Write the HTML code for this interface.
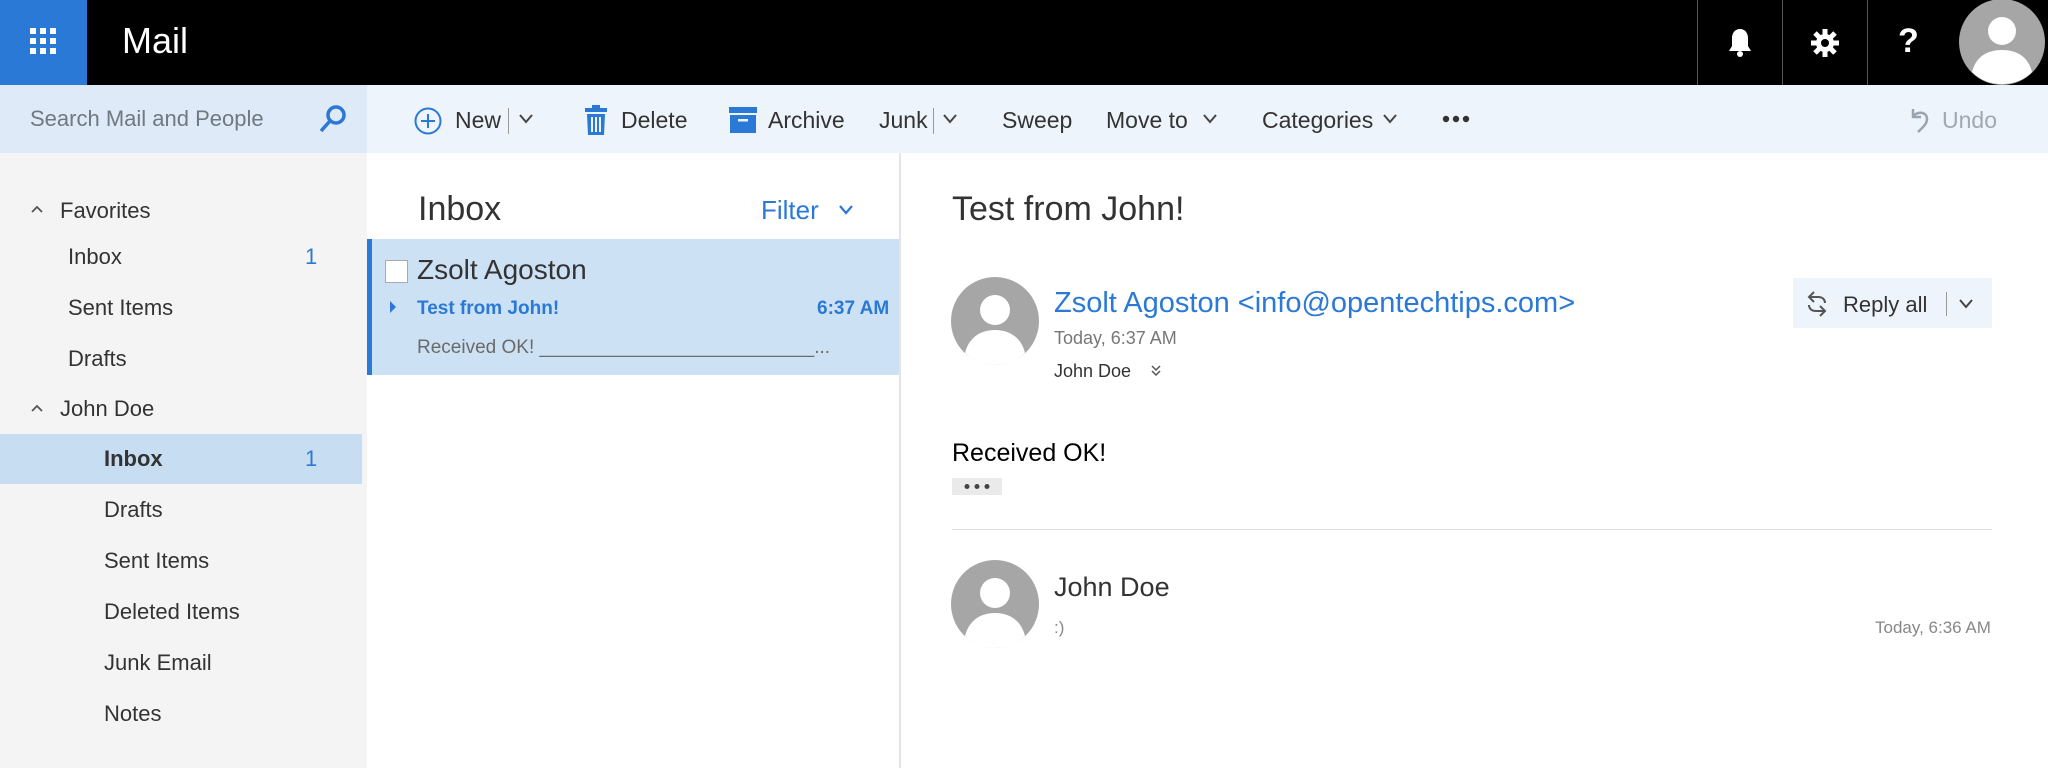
<!DOCTYPE html>
<html><head><meta charset="utf-8"><style>
*{margin:0;padding:0;box-sizing:border-box}
body{width:2048px;height:768px;overflow:hidden;font-family:"Liberation Sans",sans-serif;background:#fff;position:relative;color:#333}
.a{position:absolute;white-space:nowrap}
</style></head><body>
<div class="a" style="left:0;top:0;width:2048px;height:85px;background:#000"></div>
<div class="a" style="left:0;top:0;width:87px;height:85px;background:#2b79d6"></div>
<svg class="a" style="left:30px;top:28px" width="28" height="28" viewBox="0 0 28 28" fill="#fff">
<rect x="0" y="0" width="6" height="6"/><rect x="10" y="0" width="6" height="6"/><rect x="20" y="0" width="6" height="6"/>
<rect x="0" y="10" width="6" height="6"/><rect x="10" y="10" width="6" height="6"/><rect x="20" y="10" width="6" height="6"/>
<rect x="0" y="20" width="6" height="6"/><rect x="10" y="20" width="6" height="6"/><rect x="20" y="20" width="6" height="6"/></svg>
<div class="a" style="left:122px;top:20px;font-size:36px;color:#fff">Mail</div>
<div class="a" style="left:1697px;top:0;width:1px;height:85px;background:#555"></div>
<div class="a" style="left:1782px;top:0;width:1px;height:85px;background:#555"></div>
<div class="a" style="left:1867px;top:0;width:1px;height:85px;background:#555"></div>
<svg class="a" style="left:1727px;top:27px" width="26" height="32" viewBox="0 0 26 32" fill="#fff"><path d="M13 2c-5 0-8 4-8 9v8l-3 5h22l-3-5v-8c0-5-3-9-8-9z"/><circle cx="13" cy="27" r="3"/></svg>
<svg class="a" style="left:1809px;top:27px" width="32" height="32" viewBox="0 0 32 32"><g stroke="#fff" stroke-width="5"><line x1="16" y1="2" x2="16" y2="30"/><line x1="2" y1="16" x2="30" y2="16"/><line x1="6" y1="6" x2="26" y2="26"/><line x1="26" y1="6" x2="6" y2="26"/></g><circle cx="16" cy="16" r="9" fill="#fff"/><circle cx="16" cy="16" r="4" fill="#000"/></svg>
<div class="a" style="left:1898px;top:22px;font-size:34px;font-weight:bold;color:#fff">?</div>
<svg class="a" style="left:1958px;top:0" width="88" height="85" viewBox="0 0 88 85"><circle cx="44" cy="42" r="43" fill="#a6a6a6"/><circle cx="44" cy="31" r="14" fill="#fff"/><path d="M14 72c4-16 16-22 30-22s26 6 30 22c-8 8-18 12-30 12s-22-4-30-12z" fill="#fff"/></svg>
<div class="a" style="left:0;top:85px;width:367px;height:68px;background:#deeaf7"></div>
<div class="a" style="left:30px;top:106px;font-size:22px;color:#707880">Search Mail and People</div>
<svg class="a" style="left:318px;top:104px" width="30" height="30" viewBox="0 0 30 30" fill="none" stroke="#2b79d6" stroke-width="3.5"><circle cx="18" cy="11" r="8"/><line x1="12" y1="17" x2="3" y2="27"/></svg>
<div class="a" style="left:367px;top:85px;width:1681px;height:68px;background:#eef4fb"></div>
<div style="font-size:23px;color:#333">
<svg class="a" style="left:414px;top:107px" width="28" height="28" viewBox="0 0 28 28" fill="none" stroke="#2b79d6" stroke-width="2"><circle cx="14" cy="14" r="12.5"/><line x1="14" y1="7" x2="14" y2="21"/><line x1="7" y1="14" x2="21" y2="14"/></svg>
<div class="a" style="left:455px;top:107px">New</div>
<div class="a" style="left:508px;top:108px;width:1px;height:26px;background:#999"></div>
<svg class="a" style="left:518px;top:113px" width="16" height="12" viewBox="0 0 16 12" fill="none" stroke="#444" stroke-width="2"><path d="M2 2l6 7 6-7"/></svg>
<svg class="a" style="left:585px;top:105px" width="22" height="30" viewBox="0 0 22 30" fill="#2b79d6"><rect x="7" y="0" width="8" height="3"/><rect x="0" y="3" width="22" height="4"/><path d="M2 9h18l-1 21H3z"/><g fill="#eef4fb"><rect x="6" y="12" width="2" height="15"/><rect x="10" y="12" width="2" height="15"/><rect x="14" y="12" width="2" height="15"/></g></svg>
<div class="a" style="left:621px;top:107px">Delete</div>
<svg class="a" style="left:729px;top:107px" width="28" height="26" viewBox="0 0 28 26" fill="#2b79d6"><rect x="0" y="0" width="28" height="6"/><rect x="1" y="8" width="26" height="18"/><rect x="9" y="12" width="10" height="2.5" fill="#eef4fb"/></svg>
<div class="a" style="left:768px;top:107px">Archive</div>
<div class="a" style="left:879px;top:107px">Junk</div>
<div class="a" style="left:933px;top:108px;width:1px;height:26px;background:#999"></div>
<svg class="a" style="left:942px;top:113px" width="16" height="12" viewBox="0 0 16 12" fill="none" stroke="#444" stroke-width="2"><path d="M2 2l6 7 6-7"/></svg>
<div class="a" style="left:1002px;top:107px">Sweep</div>
<div class="a" style="left:1106px;top:107px">Move to</div>
<svg class="a" style="left:1202px;top:113px" width="16" height="12" viewBox="0 0 16 12" fill="none" stroke="#444" stroke-width="2"><path d="M2 2l6 7 6-7"/></svg>
<div class="a" style="left:1262px;top:107px">Categories</div>
<svg class="a" style="left:1382px;top:113px" width="16" height="12" viewBox="0 0 16 12" fill="none" stroke="#444" stroke-width="2"><path d="M2 2l6 7 6-7"/></svg>
<svg class="a" style="left:1442px;top:115px" width="28" height="8" viewBox="0 0 28 8" fill="#333"><circle cx="4" cy="4" r="3.2"/><circle cx="14" cy="4" r="3.2"/><circle cx="24" cy="4" r="3.2"/></svg>
<svg class="a" style="left:1908px;top:106px" width="22" height="28" viewBox="0 0 22 28" fill="none" stroke="#9aa4ae" stroke-width="2.5"><path d="M5 3v8h8"/><path d="M5 11c3-6 14-6 14 2 0 5-4 8-9 13"/></svg>
<div class="a" style="left:1942px;top:107px;color:#a0a8b0">Undo</div>
</div>
<div class="a" style="left:0;top:153px;width:367px;height:615px;background:#f4f4f4"></div>
<div class="a" style="left:0;top:434px;width:362px;height:50px;background:#c7ddf2"></div>
<div style="font-size:22px;color:#333">
<svg class="a" style="left:30px;top:204px" width="14" height="10" viewBox="0 0 14 10" fill="none" stroke="#555" stroke-width="1.8"><path d="M2 8l5-5 5 5"/></svg>
<div class="a" style="left:60px;top:198px">Favorites</div>
<div class="a" style="left:68px;top:244px">Inbox</div>
<div class="a" style="left:305px;top:244px;color:#2b79d6">1</div>
<div class="a" style="left:68px;top:295px">Sent Items</div>
<div class="a" style="left:68px;top:346px">Drafts</div>
<svg class="a" style="left:30px;top:403px" width="14" height="10" viewBox="0 0 14 10" fill="none" stroke="#555" stroke-width="1.8"><path d="M2 8l5-5 5 5"/></svg>
<div class="a" style="left:60px;top:396px">John Doe</div>
<div class="a" style="left:104px;top:446px;font-weight:bold">Inbox</div>
<div class="a" style="left:305px;top:446px;color:#2b79d6">1</div>
<div class="a" style="left:104px;top:497px">Drafts</div>
<div class="a" style="left:104px;top:548px">Sent Items</div>
<div class="a" style="left:104px;top:599px">Deleted Items</div>
<div class="a" style="left:104px;top:650px">Junk Email</div>
<div class="a" style="left:104px;top:701px">Notes</div>
</div>
<div class="a" style="left:899px;top:153px;width:2px;height:615px;background:#e4e4e4"></div>
<div class="a" style="left:418px;top:190px;font-size:34px;color:#333">Inbox</div>
<div class="a" style="left:761px;top:195px;font-size:26px;color:#2b79d6">Filter</div>
<svg class="a" style="left:838px;top:204px" width="16" height="12" viewBox="0 0 16 12" fill="none" stroke="#2b79d6" stroke-width="2.2"><path d="M2 2l6 7 6-7"/></svg>
<div class="a" style="left:367px;top:239px;width:532px;height:136px;background:#cde1f4;border-left:5px solid #2b79d6"></div>
<div class="a" style="left:385px;top:260px;width:23px;height:23px;background:#fff;border:1px solid #aaa"></div>
<div class="a" style="left:417px;top:254px;font-size:28px;color:#333">Zsolt Agoston</div>
<svg class="a" style="left:389px;top:300px" width="8" height="14" viewBox="0 0 8 14" fill="#2b79d6"><path d="M1 1l6 6-6 6z"/></svg>
<div class="a" style="left:417px;top:298px;font-size:19px;font-weight:bold;color:#2b79d6">Test from John!</div>
<div class="a" style="left:817px;top:298px;font-size:19px;font-weight:bold;color:#2b79d6">6:37 AM</div>
<div class="a" style="left:417px;top:337px;font-size:19px;color:#6a6a6a">Received OK! __________________________...</div>
<div class="a" style="left:952px;top:190px;font-size:34px;color:#333">Test from John!</div>
<svg class="a" style="left:951px;top:277px" width="88" height="88" viewBox="0 0 88 88"><circle cx="44" cy="44" r="44" fill="#a6a6a6"/><circle cx="44" cy="33" r="15" fill="#fff"/><path d="M14 76c4-16 16-23 30-23s26 7 30 23c-8 8-18 12-30 12s-22-4-30-12z" fill="#fff"/></svg>
<div class="a" style="left:1054px;top:287px;font-size:29px;color:#2b79d6">Zsolt Agoston &lt;info@opentechtips.com&gt;</div>
<div class="a" style="left:1054px;top:328px;font-size:18px;color:#777">Today, 6:37 AM</div>
<div class="a" style="left:1054px;top:361px;font-size:18px;color:#333">John Doe</div>
<svg class="a" style="left:1150px;top:364px" width="12" height="14" viewBox="0 0 12 14" fill="none" stroke="#555" stroke-width="1.5"><path d="M2 2l4 4 4-4M2 7l4 4 4-4"/></svg>
<div class="a" style="left:1793px;top:278px;width:199px;height:50px;background:#eef4fb"></div>
<svg class="a" style="left:1806px;top:290px" width="22" height="28" viewBox="0 0 22 28" fill="none" stroke="#555" stroke-width="2"><path d="M8 2L3 7l5 5M3 7h9c5 0 7 3 7 6M14 26l5-5-5-5M19 21h-9c-5 0-7-3-7-6"/></svg>
<div class="a" style="left:1843px;top:292px;font-size:22px;color:#333">Reply all</div>
<div class="a" style="left:1946px;top:292px;width:1px;height:24px;background:#999"></div>
<svg class="a" style="left:1958px;top:298px" width="16" height="12" viewBox="0 0 16 12" fill="none" stroke="#444" stroke-width="2"><path d="M2 2l6 7 6-7"/></svg>
<div class="a" style="left:952px;top:439px;font-size:25px;color:#000">Received OK!</div>
<div class="a" style="left:952px;top:478px;width:50px;height:17px;background:#eaeaea"></div>
<svg class="a" style="left:963px;top:483px" width="28" height="7" viewBox="0 0 28 7" fill="#444"><circle cx="4" cy="3.5" r="2.5"/><circle cx="14" cy="3.5" r="2.5"/><circle cx="24" cy="3.5" r="2.5"/></svg>
<div class="a" style="left:952px;top:529px;width:1040px;height:1px;background:#ddd"></div>
<svg class="a" style="left:951px;top:560px" width="88" height="88" viewBox="0 0 88 88"><circle cx="44" cy="44" r="44" fill="#a6a6a6"/><circle cx="44" cy="33" r="15" fill="#fff"/><path d="M14 76c4-16 16-23 30-23s26 7 30 23c-8 8-18 12-30 12s-22-4-30-12z" fill="#fff"/></svg>
<div class="a" style="left:1054px;top:572px;font-size:27px;color:#333">John Doe</div>
<div class="a" style="left:1054px;top:618px;font-size:17px;color:#888">:)</div>
<div class="a" style="left:1875px;top:618px;font-size:17px;color:#888">Today, 6:36 AM</div>
</body></html>
